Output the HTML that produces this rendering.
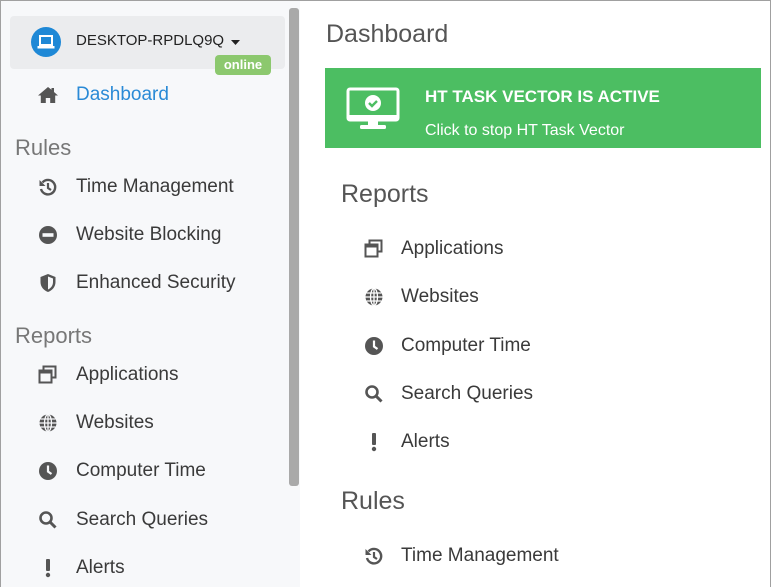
<!DOCTYPE html>
<html><head><meta charset="utf-8"><style>
*{margin:0;padding:0;box-sizing:border-box}
body{width:771px;height:587px;overflow:hidden;background:#fff;font-family:"Liberation Sans",sans-serif;position:relative}
.frame{position:absolute;inset:0;border:1px solid #a0a0a0;border-bottom:none}
.side{position:absolute;left:1px;top:1px;width:288px;height:586px;background:#f7f8fa}
.sb{position:absolute;left:289px;top:8px;width:10px;height:478px;background:#a9a9a9;border-radius:3px}
.sbt{position:absolute;left:289px;top:1px;width:11px;height:586px;background:#f7f8fa}
.main{position:absolute;left:300px;top:1px;width:470px;height:586px;background:#fff}
.t{position:absolute;white-space:nowrap;color:#3a3a3a;font-size:19px}
.h{position:absolute;white-space:nowrap;color:#777;font-size:22px}
.ic{position:absolute;width:20px;height:20px}
</style></head><body>
<div class="side"></div>
<div class="sbt"></div>
<div class="sb"></div>
<div class="main"></div>
<div class="frame"></div>

<div style="position:absolute;left:10px;top:16px;width:275px;height:53px;background:#ebecee;border-radius:4px"></div>
<svg style="position:absolute;left:31px;top:27px" width="30" height="30" viewBox="0 0 30 30"><circle cx="15" cy="15" r="15" fill="#1e88d6"/><rect x="9" y="9" width="12" height="9" fill="none" stroke="#fff" stroke-width="2"/><rect x="6.5" y="19" width="17" height="2.5" fill="#fff"/></svg>
<div class="t" style="left:76px;top:32px;font-size:15px;color:#222">DESKTOP-RPDLQ9Q</div>
<svg style="position:absolute;left:231px;top:40px" width="9" height="5"><path d="M0 0H9L4.5 5Z" fill="#222"/></svg>
<div style="position:absolute;left:215px;top:55px;width:56px;height:20px;background:#8cc86e;border-radius:4px;color:#fff;font-size:13px;font-weight:bold;text-align:center;line-height:20px">online</div>

<svg class="ic" style="left:38px;top:85px" viewBox="0 0 20 20"><path d="M10 2L0 10.5h2.8V18h5v-5h4.4v5h5v-7.5H20L16 7V3h-2.5v1.8Z" fill="#555"/></svg>
<div class="t" style="left:76px;top:84px;font-size:19px;color:#2a8ad6">Dashboard</div>

<div class="h" style="left:15px;top:135px">Rules</div>
<svg class="ic" style="left:38px;top:177px" viewBox="0 0 20 20"><path d="M4.5 5.5A7.2 7.2 0 1 1 3 12" fill="none" stroke="#555" stroke-width="2.4"/><path d="M1.5 3v6h6Z" fill="#555"/><path d="M10 6v5l3 2" fill="none" stroke="#555" stroke-width="2.2"/></svg>
<div class="t" style="left:76px;top:176px">Time Management</div>
<svg class="ic" style="left:38px;top:225px" viewBox="0 0 20 20"><circle cx="10" cy="10" r="9" fill="#555"/><rect x="4.5" y="8.2" width="11" height="3.6" fill="#f7f8fa"/></svg>
<div class="t" style="left:76px;top:224px">Website Blocking</div>
<svg class="ic" style="left:38px;top:273px" viewBox="0 0 20 20"><path d="M10 1L2.5 4v5c0 5 3.5 8.5 7.5 10 4-1.5 7.5-5 7.5-10V4Z" fill="#555"/><path d="M10 3.5v13c2.8-1.3 5-4 5-7.5V5.5Z" fill="#f7f8fa"/></svg>
<div class="t" style="left:76px;top:272px">Enhanced Security</div>

<div class="h" style="left:15px;top:323px">Reports</div>
<svg class="ic" style="left:38px;top:365px" viewBox="0 0 20 20"><rect x="5.5" y="1.5" width="12" height="11" fill="none" stroke="#555" stroke-width="2"/><rect x="1.5" y="5.5" width="12" height="12" fill="#f7f8fa" stroke="#555" stroke-width="2"/><rect x="1.5" y="5.5" width="12" height="3" fill="#555"/></svg>
<div class="t" style="left:76px;top:364px">Applications</div>
<svg class="ic" style="left:38px;top:413px" viewBox="0 0 20 20"><circle cx="10" cy="10" r="8.5" fill="#555"/><path d="M10 1.5v17M1.5 10h17M2.5 6h15M2.5 14h15" stroke="#f7f8fa" stroke-width="1.3"/><ellipse cx="10" cy="10" rx="3.5" ry="8.5" fill="none" stroke="#f7f8fa" stroke-width="1.3"/></svg>
<div class="t" style="left:76px;top:412px">Websites</div>
<svg class="ic" style="left:38px;top:461px" viewBox="0 0 20 20"><circle cx="10" cy="10" r="9" fill="#555"/><path d="M10 4.5v6l3.5 2.5" fill="none" stroke="#f7f8fa" stroke-width="2.2"/></svg>
<div class="t" style="left:76px;top:460px">Computer Time</div>
<svg class="ic" style="left:38px;top:510px" viewBox="0 0 20 20"><circle cx="8" cy="8" r="5.5" fill="none" stroke="#555" stroke-width="2.6"/><path d="M12 12l5.5 5.5" stroke="#555" stroke-width="3"/></svg>
<div class="t" style="left:76px;top:509px">Search Queries</div>
<svg class="ic" style="left:38px;top:558px" viewBox="0 0 20 20"><rect x="8" y="1" width="4" height="12" rx="1" fill="#555"/><circle cx="10" cy="17" r="2.2" fill="#555"/></svg>
<div class="t" style="left:76px;top:557px">Alerts</div>

<div class="t" style="left:326px;top:20px;font-size:25px;color:#555">Dashboard</div>
<div style="position:absolute;left:325px;top:68px;width:436px;height:80px;background:#4cbe62"></div>
<svg style="position:absolute;left:346px;top:87px" width="54" height="45" viewBox="0 0 54 45"><rect x="2" y="2" width="50" height="31" rx="2" fill="none" stroke="#fff" stroke-width="3"/><rect x="2" y="28" width="50" height="5" fill="#fff"/><path d="M22 33v6h10v-6Z" fill="#fff"/><rect x="14" y="38" width="26" height="4" rx="1.5" fill="#fff"/><circle cx="27" cy="16" r="8" fill="#fff"/><path d="M23 16l3 3 5-5" fill="none" stroke="#4cbe62" stroke-width="2.4"/></svg>
<div class="t" style="left:425px;top:87px;font-size:17px;font-weight:bold;color:#fff">HT TASK VECTOR IS ACTIVE</div>
<div class="t" style="left:425px;top:122px;font-size:16px;color:#fff">Click to stop HT Task Vector</div>

<div class="h" style="left:341px;top:180px;font-size:25px;color:#555">Reports</div>
<svg class="ic" style="left:364px;top:239px" viewBox="0 0 20 20"><rect x="5.5" y="1.5" width="12" height="11" fill="none" stroke="#555" stroke-width="2"/><rect x="1.5" y="5.5" width="12" height="12" fill="#fff" stroke="#555" stroke-width="2"/><rect x="1.5" y="5.5" width="12" height="3" fill="#555"/></svg>
<div class="t" style="left:401px;top:238px">Applications</div>
<svg class="ic" style="left:364px;top:287px" viewBox="0 0 20 20"><circle cx="10" cy="10" r="8.5" fill="#555"/><path d="M10 1.5v17M1.5 10h17M2.5 6h15M2.5 14h15" stroke="#fff" stroke-width="1.3"/><ellipse cx="10" cy="10" rx="3.5" ry="8.5" fill="none" stroke="#fff" stroke-width="1.3"/></svg>
<div class="t" style="left:401px;top:286px">Websites</div>
<svg class="ic" style="left:364px;top:336px" viewBox="0 0 20 20"><circle cx="10" cy="10" r="9" fill="#555"/><path d="M10 4.5v6l3.5 2.5" fill="none" stroke="#fff" stroke-width="2.2"/></svg>
<div class="t" style="left:401px;top:335px">Computer Time</div>
<svg class="ic" style="left:364px;top:384px" viewBox="0 0 20 20"><circle cx="8" cy="8" r="5.5" fill="none" stroke="#555" stroke-width="2.6"/><path d="M12 12l5.5 5.5" stroke="#555" stroke-width="3"/></svg>
<div class="t" style="left:401px;top:383px">Search Queries</div>
<svg class="ic" style="left:364px;top:432px" viewBox="0 0 20 20"><rect x="8" y="1" width="4" height="12" rx="1" fill="#555"/><circle cx="10" cy="17" r="2.2" fill="#555"/></svg>
<div class="t" style="left:401px;top:431px">Alerts</div>

<div class="h" style="left:341px;top:487px;font-size:25px;color:#555">Rules</div>
<svg class="ic" style="left:364px;top:546px" viewBox="0 0 20 20"><path d="M4.5 5.5A7.2 7.2 0 1 1 3 12" fill="none" stroke="#555" stroke-width="2.4"/><path d="M1.5 3v6h6Z" fill="#555"/><path d="M10 6v5l3 2" fill="none" stroke="#555" stroke-width="2.2"/></svg>
<div class="t" style="left:401px;top:545px">Time Management</div>
</body></html>
